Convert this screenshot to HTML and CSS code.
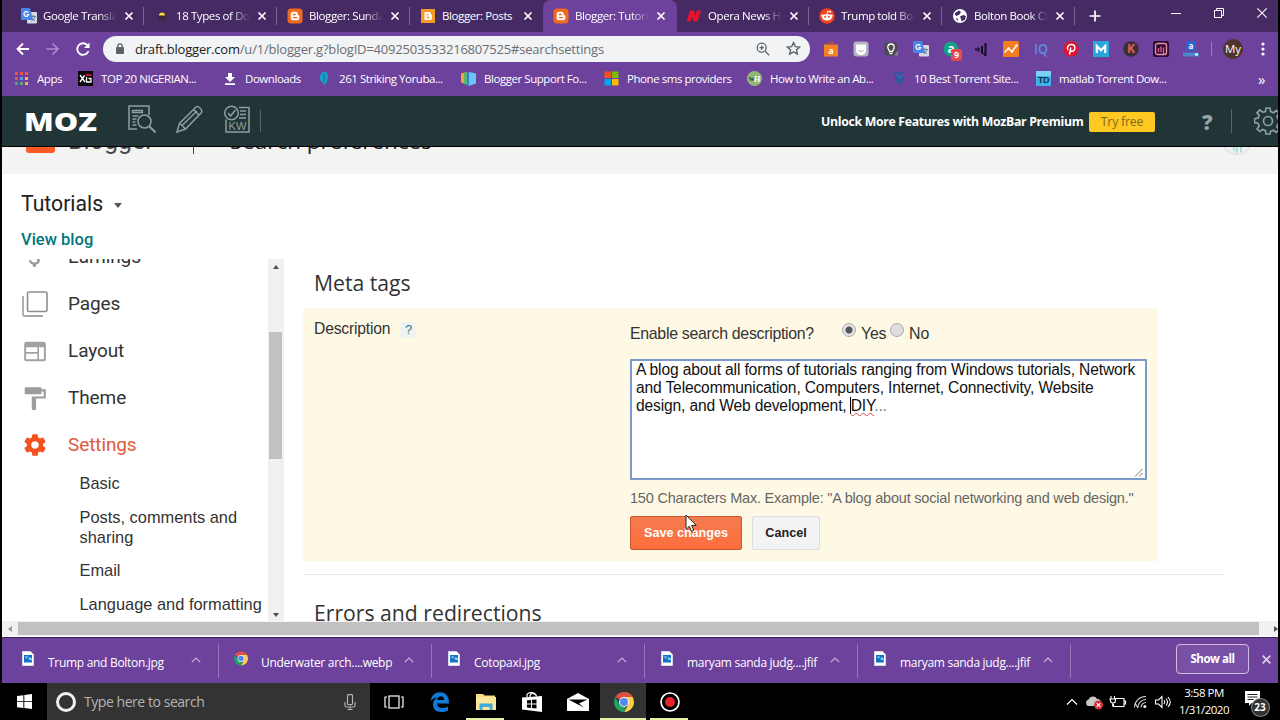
FILE: index.html
```html
<!DOCTYPE html>
<html>
	<head>
		<meta charset="UTF-8">
		<title>Blogger: Tutorials - Search preferences</title>
		<link rel="stylesheet" href="styles.css">
	</head>
	<body>
		<!-- shared icons -->
		<svg class="defs" width="0" height="0">
			<symbol id="x" viewBox="0 0 10 10"><path d="M1.5 1.5l7 7M8.5 1.5l-7 7" stroke="currentColor" stroke-width="1.7" fill="none"/></symbol>
			<symbol id="blogger" viewBox="0 0 16 16">
				<rect x="0.5" y="0.5" width="15" height="15" rx="3.5" fill="#f06a1d"/>
				<path d="M6.3 3.8h2.2a2.3 2.3 0 0 1 2.3 2.3c0 1 .4 1 1 1.1.4.1.5.3.5.8v1.700a2.600 2.600 0 0 1-2.600 2.600H6.300a2.600 2.600 0 0 1-2.600-2.600V6.400a2.600 2.600 0 0 1 2.600-2.600z" fill="#fff"/>
				<path d="M6.300 6.500h2M6.300 9.700h3.500" stroke="#f06a1d" stroke-width="1.300" stroke-linecap="round"/>
			</symbol>
			<symbol id="translate" viewBox="0 0 16 16">
				<rect x="6" y="4" width="10" height="11.500" rx="1" fill="#d5d9e2"/>
				<path d="M9 8.500h6M12 7v1.500M14 8.500c-.5 2-2 3.500-3.500 4.500M10.500 9.500c.8 1.500 2 2.700 3.500 3.500" stroke="#6b7a90" stroke-width="1" fill="none"/>
				<path d="M1 0h8l3 12H1a1 1 0 0 1-1-1V1a1 1 0 0 1 1-1z" fill="#4a86e8"/>
				<path d="M7.300 4.600a2.400 2.400 0 1 0 .4 1.900H5.500" stroke="#fff" stroke-width="1.200" fill="none"/>
			</symbol>
			<symbol id="chrome" viewBox="0 0 20 20">
				<path d="M10 10L1.340 5A10 10 0 0 1 18.660 5z" fill="#dd5144"/>
				<path d="M10 10V0a10 10 0 0 1 8.660 5H10z" fill="#dd5144"/>
				<path d="M18.660 5A10 10 0 0 1 10 20l4.330-7.500L10 5z" fill="#ffcd46"/>
				<path d="M10 20A10 10 0 0 1 1.340 5l4.330 7.500L12 14.500z" fill="#1ea362"/>
				<circle cx="10" cy="10" r="5" fill="#f1f1f1"/>
				<circle cx="10" cy="10" r="3.900" fill="#4a8af4"/>
			</symbol>
			<symbol id="file" viewBox="0 0 12 15">
				<path d="M.5.5h8l3 3v11H.5z" fill="#fff" stroke="#d8d8e4"/>
				<rect x="2" y="4" width="8" height="7.500" fill="#1473c4"/>
				<path d="M2.500 5.500h4l-2 2zM6 8l2-2 2 2v1.500z" fill="#8fd0f5"/>
			</symbol>
			<symbol id="up" viewBox="0 0 10 6"><path d="M.8 5.200L5 1l4.200 4.200" fill="none" stroke="currentColor" stroke-width="1.200"/></symbol>
		</svg>

		<div class="screen">
			<!-- tabs -->
			<div class="tabs">
				<div class="tab"><svg class="fav"><use href="#translate"/></svg><span class="name">Google Translate</span><svg class="close"><use href="#x"/></svg></div>
				<div class="tab"><svg class="fav" viewBox="0 0 16 16"><circle cx="8" cy="8" r="4" fill="#3a2b3b"/><path d="M5 7.500a3 3 0 0 1 6 0z" fill="#f0dc3c"/></svg><span class="name">18 Types of Domain</span><svg class="close"><use href="#x"/></svg></div>
				<div class="tab"><svg class="fav"><use href="#blogger"/></svg><span class="name">Blogger: Sunday Blog</span><svg class="close"><use href="#x"/></svg></div>
				<div class="tab last"><svg class="fav sq" viewBox="0 0 16 16"><rect x="1" y="1" width="14" height="14" fill="#f39a25"/><path d="M4.500 4h4.500a2 2 0 0 1 2 2.500c1 .3 1 .8 1 1.500v1.500a2.500 2.500 0 0 1-2.500 2.500h-5z" fill="#fff"/><path d="M6.500 6.500h2M6.500 9.500h3" stroke="#f39a25" stroke-width="1.300"/></svg><span class="name">Blogger: Posts</span><svg class="close"><use href="#x"/></svg></div>
				<div class="tab active"><svg class="fav"><use href="#blogger"/></svg><span class="name">Blogger: Tutorials</span><svg class="close"><use href="#x"/></svg></div>
				<div class="tab"><svg class="fav" viewBox="0 0 16 16"><path d="M4 2.500h4l1.200 5L11 2.500h4l-3.500 11h-4l-1.200-5-1.800 5h-4z" fill="#e8122b"/></svg><span class="name">Opera News Hub</span><svg class="close"><use href="#x"/></svg></div>
				<div class="tab"><svg class="fav" viewBox="0 0 16 16"><circle cx="8" cy="8" r="7.700" fill="#f4441e"/><ellipse cx="8" cy="9.300" rx="4.700" ry="3.300" fill="#fff"/><circle cx="3.500" cy="7.700" r="1.200" fill="#fff"/><circle cx="12.500" cy="7.700" r="1.200" fill="#fff"/><path d="M8 6l.8-2.800 2.400.5" stroke="#fff" fill="none"/><circle cx="11.200" cy="3.800" r="1" fill="#fff"/><circle cx="6.200" cy="8.700" r="1" fill="#f4441e"/><circle cx="9.800" cy="8.700" r="1" fill="#f4441e"/></svg><span class="name">Trump told Bolton</span><svg class="close"><use href="#x"/></svg></div>
				<div class="tab"><svg class="fav" viewBox="0 0 16 16"><circle cx="8" cy="8" r="7" fill="#fff"/><path d="M3 5l4-2.500L9 4 7.500 6.500 4.500 8 3 7zM8 8.500l3-1.500 3 1-1 3.500-3.500 2L9 11zM3.500 10l2.500 1-.5 2z" fill="#462a64"/></svg><span class="name">Bolton Book Club</span><svg class="close"><use href="#x"/></svg></div>
				<svg class="plus" viewBox="0 0 12 12"><path d="M6 .5v11M.5 6h11" stroke="#fff" stroke-width="1.700"/></svg>
				<div class="winbtns">
					<svg viewBox="0 0 12 12"><path d="M1 6.500h10" stroke="#fff"/></svg>
					<svg viewBox="0 0 12 12"><path d="M1.500 3.500h7v7h-7zM3.500 3.500v-2h7v7h-2" fill="none" stroke="#fff"/></svg>
					<svg viewBox="0 0 12 12"><path d="M1.300 1.300l9.400 9.400M10.700 1.300l-9.400 9.400" stroke="#fff" stroke-width="1.100"/></svg>
				</div>
			</div>

			<!-- address bar -->
			<div class="toolbar">
				<div class="nav">
					<svg viewBox="0 0 16 16"><path d="M14 8H2.500M8 2.500L2.500 8 8 13.500" fill="none" stroke="#fff" stroke-width="1.800"/></svg>
					<svg viewBox="0 0 16 16"><path d="M1.500 8H13M7.500 2.500L13 8l-5.500 5.500" fill="none" stroke="#a98bcb" stroke-width="1.700"/></svg>
					<svg viewBox="0 0 16 16"><path d="M13.500 10A5.800 5.800 0 1 1 12.300 4.100L14 6" fill="none" stroke="#fff" stroke-width="1.800"/><path d="M14.500 1.500v5.500H9z" fill="#fff"/></svg>
				</div>
				<div class="omnibox">
					<svg class="lock" viewBox="0 0 8 11"><rect y="4" width="8" height="7" rx="1" fill="#5f6368"/><path d="M1.800 5V3a2.200 2.200 0 0 1 4.400 0v2" fill="none" stroke="#5f6368" stroke-width="1.300"/></svg>
					<span class="url"><b>draft.blogger.com</b>/u/1/blogger.g?blogID=4092503533216807525#searchsettings</span>
					<svg class="mag" viewBox="0 0 14 14"><circle cx="5.700" cy="5.700" r="4.500" fill="none" stroke="#5f6368" stroke-width="1.300"/><path d="M9 9l4.200 4.200M3.500 5.700h4.400M5.700 3.500v4.400" stroke="#5f6368" stroke-width="1.300"/></svg>
					<svg class="star" viewBox="0 0 14 14"><path d="M7 1.500l1.700 3.700 4 .4-3 2.700.9 4L7 10.200l-3.600 2.100.9-4-3-2.700 4-.4z" fill="none" stroke="#5f6368" stroke-width="1.300"/></svg>
				</div>
				<div class="exts">
					<svg viewBox="0 0 16 16"><path d="M1 3.500h14v12H1z" fill="#f58220"/><path d="M5 4c0-4 6-4 6 0" fill="none" stroke="#c9591b" stroke-width="1.200"/><text x="8" y="12.500" class="g w">a</text></svg>
					<svg viewBox="0 0 16 16"><rect x=".5" y=".5" width="15" height="15" rx="3" fill="#b9b4c5"/><path d="M3 3.500h10v6a5 4.500 0 0 1-10 0z" fill="#fff"/><path d="M5.500 9.500q2.500 2 5 0" stroke="#aaa" fill="none"/></svg>
					<svg viewBox="0 0 16 16"><rect x="1.500" y="1.500" width="13" height="13" rx="2" fill="#4d4a50"/><path d="M6.500 10.500C6.500 9 4.800 8.500 4.800 6.200a3.200 3.200 0 0 1 6.400 0C11.200 8.500 9.500 9 9.500 10.500z" fill="none" stroke="#fff" stroke-width="1.300"/><path d="M6.500 12.500h3" stroke="#fff" stroke-width="1.300"/><path d="M15 9.500l-4 5h4z" fill="#8a878e"/></svg>
					<svg><use href="#translate"/></svg>
					<div class="badged"><svg viewBox="0 0 16 16"><circle cx="8" cy="8" r="7.500" fill="#159f86"/><text x="8" y="12" class="g w big">a</text></svg><i>9</i></div>
					<svg viewBox="0 0 16 16"><path d="M12.500 2v13M9 5v7.500M5.500 6.500v4" stroke="#150d22" stroke-width="2"/><path d="M2 7.500h2v2H2zM9 12l3.500 3v-3z" fill="#150d22"/></svg>
					<svg viewBox="0 0 16 16"><rect width="16" height="16" rx="1.500" fill="#f57c1f"/><path d="M1.500 11.500l4-4 3.500 3L14 4" fill="none" stroke="#fff" stroke-width="1.500"/><circle cx="5.500" cy="7.500" r="1.200" fill="#fff"/><circle cx="9" cy="10.500" r="1.200" fill="#fff"/><circle cx="13.500" cy="4.500" r="1.200" fill="#fff"/></svg>
					<svg viewBox="0 0 16 16"><text x="8" y="13" class="g iq" textLength="14" lengthAdjust="spacingAndGlyphs">IQ</text></svg>
					<svg viewBox="0 0 16 16"><circle cx="8" cy="8" r="7.800" fill="#dc1630"/><path d="M7.800 6.500L6.500 13.500M5 9C3.300 6.500 5.300 3.600 8.300 3.600c5 0 4.200 6.700.8 6.700-.9 0-1.600-.5-1.700-1.200" fill="none" stroke="#fff" stroke-width="1.500"/></svg>
					<svg viewBox="0 0 16 16"><rect width="16" height="16" fill="#2ba5dc"/><path d="M3.800 12V5L8 9.200 12.200 5v7" fill="none" stroke="#fff" stroke-width="2.200"/></svg>
					<svg viewBox="0 0 16 16"><circle cx="8" cy="8" r="7.800" fill="#3a2f38"/><text x="8" y="12.300" class="g k">K</text></svg>
					<svg viewBox="0 0 16 16"><rect width="16" height="16" rx="2" fill="#2b0d36"/><path d="M4.500 2.500h7a2 2 0 0 1 2 2v7a2 2 0 0 1-2 2M11.500 13.500h-7a2 2 0 0 1-2-2v-7a2 2 0 0 1 2-2" fill="none" stroke="#ee8fa4" stroke-width="1.300"/><path d="M5.500 7v4M8 5.500V11M10.500 6.500V13" stroke="#ee5f95" stroke-width="1.300"/></svg>
					<svg viewBox="0 0 16 16"><rect x="3.500" width="9" height="10" rx="2" fill="#2b68d0"/><text x="8" y="8" class="g w sm">a</text><rect x="0" y="11.500" width="16" height="4" fill="#4b86c8"/><rect x="12" y="12.500" width="3" height="2" fill="#fff"/></svg>
				</div>
				<div class="avatar">My</div>
				<svg class="dots" viewBox="0 0 4 16"><circle cx="2" cy="3" r="1.600" fill="#fff"/><circle cx="2" cy="8" r="1.600" fill="#fff"/><circle cx="2" cy="13" r="1.600" fill="#fff"/></svg>
			</div>

			<!-- bookmarks -->
			<div class="bookmarks">
				<div class="bm"><svg viewBox="0 0 15 15"><path d="M1 1h3v3H1zM1 6h3v3H1z" fill="#e2574c"/><path d="M6 1h3v3H6zM11 1h3v3h-3z" fill="#e8574b"/><path d="M6 6h3v3H6z" fill="#5b9be8"/><path d="M11 6h3v3h-3zM11 11h3v3h-3z" fill="#f5b63c"/><path d="M1 11h3v3H1z" fill="#4aa877"/><path d="M6 11h3v3H6z" fill="#55a87f"/></svg>Apps</div>
				<div class="bm"><svg viewBox="0 0 15 15"><rect width="15" height="15" fill="#0b0408"/><path d="M2 4l5 7M6.500 4.500L2 11" stroke="#fff" stroke-width="1.400"/><path d="M7.500 4h6" stroke="#e22b3c" stroke-width="1.600"/><path d="M13 7.500h-2.500M13 7v4H8.500V6" fill="none" stroke="#fff" stroke-width="1.300"/></svg>TOP 20 NIGERIAN...</div>
				<div class="bm"><svg viewBox="0 0 15 15"><path d="M6 2h4v4h3L8 11 3 6h3zM3 12.300h10v1.700H3z" fill="#fff"/></svg>Downloads</div>
				<div class="bm"><svg viewBox="0 0 15 15"><path d="M7 1c3-1 5 1 5 4l-1 6-3 3-1-2-3-3c-1-3 0-6 3-8z" fill="#19a0c9"/><path d="M8 3v8" stroke="#0c6d9c"/></svg>261 Striking Yoruba...</div>
				<div class="bm"><svg viewBox="0 0 15 15"><path d="M0 2.500L5 1v12l-5-1.500z" fill="#f2a33c"/><path d="M3 2l4-1v13l-4-1z" fill="#56b86a"/><path d="M6 1h3v14H6z" fill="#3183d8"/><path d="M8 1l7 1.500v10L8 15z" fill="#6fc3f5"/></svg>Blogger Support Fo...</div>
				<div class="bm"><svg viewBox="0 0 15 15"><path d="M.500.500h6.500v6.500H.500z" fill="#f25022"/><path d="M8 .500h6.500v6.500H8z" fill="#7fba00"/><path d="M.500 8h6.500v6.500H.500z" fill="#00a4ef"/><path d="M8 8h6.500v6.500H8z" fill="#ffb900"/></svg>Phone sms providers</div>
				<div class="bm"><svg viewBox="0 0 15 15"><circle cx="7.500" cy="7.500" r="7.500" fill="#93b874"/><text x="4.500" y="10" class="wh dk">w</text><text x="10" y="10.500" class="wh">H</text></svg>How to Write an Ab...</div>
				<div class="bm"><svg viewBox="0 0 15 15"><path d="M3 1h10v2H3zM4 4h9v5l-4 5-4-3z" fill="#31569f"/><path d="M5 4l4 3 3-3" stroke="#4b7abf" fill="none"/></svg>10 Best Torrent Site...</div>
				<div class="bm"><svg viewBox="0 0 15 15"><rect width="15" height="15" fill="#3fb3e6"/><rect width="15" height="5" fill="#7cd0f3"/><text x="7.500" y="11.500" class="td">TD</text></svg>matlab Torrent Dow...</div>
				<div class="more">»</div>
			</div>

			<!-- mozbar -->
			<div class="mozbar">
				<svg class="logo" viewBox="0 0 72 20"><text x="-1" y="18" textLength="73" lengthAdjust="spacingAndGlyphs">MOZ</text></svg>
				<div class="tools">
					<svg viewBox="0 0 28 28"><path d="M9 24H1V1h20v9" fill="none" stroke="#8f9ea0" stroke-width="1.500"/><path d="M4.500 5.500h10v2h-10zM4.500 11h6M4.500 14h4M4.500 17h3M4.500 20h4" fill="none" stroke="#8f9ea0" stroke-width="1.300"/><circle cx="16.500" cy="16.500" r="6.500" fill="none" stroke="#8f9ea0" stroke-width="1.500"/><path d="M21.500 21.500l6 6" stroke="#8f9ea0" stroke-width="2"/></svg>
					<svg viewBox="0 0 28 28"><path d="M1 27l2.500-8.500L20 2c2-2 7 3 5.500 5.500L9.500 24zM4 18.500l5.500 5.500M17.500 4.500l6 6M5.500 21L21 6M1 27l3-1" fill="none" stroke="#8f9ea0" stroke-width="1.500"/></svg>
					<svg viewBox="0 0 28 28"><path d="M16 2.500h10V27H3V14.500" fill="none" stroke="#8f9ea0" stroke-width="1.500"/><circle cx="8.500" cy="8" r="6.800" fill="none" stroke="#8f9ea0" stroke-width="1.500"/><path d="M5 8l2.500 3 5-6" fill="none" stroke="#8f9ea0" stroke-width="1.500"/><path d="M17 6h6M17 9.500h6M16 13h7" stroke="#8f9ea0" stroke-width="1.300"/><text x="14.500" y="25" textLength="18" lengthAdjust="spacingAndGlyphs">KW</text></svg>
				</div>
				<span class="unlock">Unlock More Features with MozBar Premium</span>
				<span class="try">Try free</span>
				<span class="help">?</span>
				<div class="gearbox"><svg viewBox="0 0 28 28"><path d="M11.500 4.500L12 1h4l.5 3.500 3 1.200L22.500 3.500l2.500 2.800-2 3 1.200 2.700 3.300.5v4l-3.500.5-1.200 2.800 2.200 2.800-2.800 2.700-2.900-2.100-2.800 1.200L16 27h-4l-.5-3.400-2.800-1.200-2.900 2.100L3 21.800 5.200 19 4 16.200.5 15.700v-4L4 11.200l1.200-2.800L3 5.800 5.800 3l2.900 2.200z" fill="none" stroke="#8f9ea0" stroke-width="1.700"/><circle cx="14" cy="14" r="4.500" fill="none" stroke="#8f9ea0" stroke-width="1.700"/></svg></div>
			</div>

			<!-- page -->
			<div class="page">
				<div class="head">
					<div class="blogo"></div>
					<span class="brand">Blogger</span>
					<span class="bar"></span>
					<span class="title">Search preferences</span>
					<svg class="me" viewBox="0 0 32 32"><circle cx="16" cy="16" r="15.500" fill="#eaf3f2" stroke="#dadada"/><path d="M12 24l2 4M16 23v7M20 23v6" stroke="#b5e0da" stroke-width="2"/></svg>
				</div>

				<div class="cols">
					<div class="side">
						<div class="blogname">Tutorials<i class="caret"></i></div>
						<a class="view">View blog</a>
						<div class="scroller">
							<ul class="menu">
								<li><svg viewBox="0 0 24 24"><path d="M11.800 10.900c-2.270-.59-3-1.200-3-2.150 0-1.090 1.010-1.850 2.700-1.850 1.780 0 2.440.85 2.500 2.100h2.210c-.07-1.720-1.120-3.300-3.210-3.810V3h-3v2.160c-1.940.42-3.500 1.680-3.500 3.610 0 2.310 1.910 3.460 4.700 4.130 2.500.6 3 1.480 3 2.410 0 .69-.49 1.790-2.700 1.790-2.060 0-2.870-.92-2.980-2.100h-2.200c.12 2.190 1.760 3.420 3.680 3.830V21h3v-2.150c1.950-.37 3.500-1.500 3.500-3.550 0-2.840-2.430-3.810-4.700-4.400z" fill="#999"/></svg>Earnings</li>
								<li><svg class="pg" viewBox="0 0 26 26"><rect x="5.500" y="1" width="19.500" height="19.500" rx="1.500" fill="none" stroke="#8e8e8e" stroke-width="1.600"/><path d="M1 5v18.500a1.500 1.500 0 0 0 1.500 1.500H21" fill="none" stroke="#a8a8a8" stroke-width="1.800"/></svg>Pages</li>
								<li><svg viewBox="0 0 24 24"><rect x="2" y="3.500" width="20" height="18" rx="2" fill="#a2a2a2"/><path d="M3.800 8.500h10.400v4.500H3.800zM3.800 14.500h10.400v5.200H3.800zM15.700 8.500h4.500v11.200h-4.500z" fill="#fff"/></svg>Layout</li>
								<li><svg viewBox="0 0 24 24"><path d="M18 4V3c0-.55-.45-1-1-1H3.500c-.55 0-1 .45-1 1v4.500c0 .55.45 1 1 1H17c.55 0 1-.45 1-1V6h2v4.500H9V22c0 .55.45 1 1 1h2c.55 0 1-.45 1-1v-9.500h9V4z" fill="#9c9c9c"/></svg>Theme</li>
								<li class="on"><svg class="cog" viewBox="0 0 24 24"><path d="M19.430 12.980c.04-.32.07-.64.07-.98s-.03-.66-.07-.98l2.110-1.650c.19-.15.24-.42.12-.64l-2-3.460c-.12-.22-.39-.3-.61-.22l-2.490 1c-.52-.4-1.080-.73-1.690-.98l-.38-2.650C14.460 2.180 14.250 2 14 2h-4c-.25 0-.46.18-.49.42l-.38 2.650c-.61.25-1.170.59-1.690.98l-2.490-1c-.23-.09-.49 0-.61.22l-2 3.460c-.13.22-.07.49.12.64l2.110 1.650c-.04.32-.07.65-.07.98s.03.66.07.98l-2.110 1.650c-.19.15-.24.42-.12.64l2 3.460c.12.22.39.3.61.22l2.490-1c.52.4 1.080.73 1.690.98l.38 2.650c.03.24.24.42.49.42h4c.25 0 .46-.18.49-.42l.38-2.650c.61-.25 1.170-.59 1.690-.98l2.490 1c.23.09.49 0 .61-.22l2-3.460c.12-.22.07-.49-.12-.64l-2.110-1.650zM12 15.500c-1.930 0-3.500-1.570-3.500-3.500s1.570-3.500 3.500-3.500 3.500 1.570 3.500 3.500-1.570 3.500-3.500 3.500z" fill="#f4511e"/></svg>Settings</li>
							</ul>
							<ul class="sub">
								<li>Basic</li>
								<li>Posts, comments and sharing</li>
								<li>Email</li>
								<li>Language and formatting</li>
							</ul>
							<div class="vbar"><i class="tri-up"></i><span class="thumb"></span><i class="tri-down"></i></div>
						</div>
					</div>

					<div class="main">
						<h2>Meta tags</h2>
						<div class="panel">
							<div class="label">Description <span class="q">?</span></div>
							<div class="form">
								<div class="enable"><span class="ask">Enable search description?</span><i class="radio checked"></i><span class="yes">Yes</span><i class="radio"></i><span>No</span></div>
								<div class="textarea">
									<p>A blog about all forms of tutorials ranging from Windows tutorials, Network</p>
									<p class="l2">and Telecommunication, Computers, Internet, Connectivity, Website</p>
									<p class="l3">design, and Web development, <span class="cursor"></span><span class="diy">DIY</span><span class="rest">...</span></p>
									<svg class="grip" viewBox="0 0 9 9"><path d="M1 8.500L8.500 1M5 8.500L8.500 5" stroke="#777"/></svg>
								</div>
								<div class="hint">150 Characters Max. Example: "A blog about social networking and web design."</div>
								<div class="btns">
									<span class="btn save">Save changes</span>
									<span class="btn">Cancel</span>
									<svg class="pointer" viewBox="0 0 12 19"><path d="M1 1v14.500l3.300-3.200 2.200 5 2.300-1-2.200-4.900h4.600z" fill="#fff" stroke="#222"/></svg>
								</div>
							</div>
						</div>
						<hr>
						<h2 class="err">Errors and redirections</h2>
					</div>
				</div>
			</div>
			<div class="hbar"><i class="tri-left"></i><span class="thumb"></span><i class="tri-right"></i></div>

			<!-- downloads -->
			<div class="downloads">
				<div class="dl"><svg class="ic"><use href="#file"/></svg><span class="fname">Trump and Bolton.jpg</span><svg class="up"><use href="#up"/></svg></div>
				<div class="dl"><svg class="ic"><use href="#chrome"/></svg><span class="fname">Underwater arch....webp</span><svg class="up"><use href="#up"/></svg></div>
				<div class="dl"><svg class="ic"><use href="#file"/></svg><span class="fname">Cotopaxi.jpg</span><svg class="up"><use href="#up"/></svg></div>
				<div class="dl"><svg class="ic"><use href="#file"/></svg><span class="fname">maryam sanda judg....jfif</span><svg class="up"><use href="#up"/></svg></div>
				<div class="dl"><svg class="ic"><use href="#file"/></svg><span class="fname">maryam sanda judg....jfif</span><svg class="up"><use href="#up"/></svg></div>
				<span class="showall">Show all</span>
				<svg class="dclose"><use href="#x"/></svg>
			</div>

			<!-- taskbar -->
			<div class="taskbar">
				<div class="start"><svg viewBox="0 0 16 16"><path d="M0 2.200l6.800-1v6.400H0zM7.800 1L16 0v7.600H7.800zM0 8.500h6.800V15L0 14zM7.800 8.500H16V16l-8.200-1.100z" fill="#fff"/></svg></div>
				<div class="search"><i class="ring"></i><span>Type here to search</span><svg viewBox="0 0 12 16"><rect x="3.500" y=".6" width="5" height="10" rx="1" fill="none" stroke="#b5b5b5" stroke-width="1.100"/><path d="M1 8v3.500a1.500 1.500 0 0 0 1.500 1.500h7a1.500 1.500 0 0 0 1.500-1.500V8M6 13v2.500M3.500 15.500h5" fill="none" stroke="#b5b5b5" stroke-width="1.100"/></svg></div>
				<div class="app"><svg viewBox="0 0 20 20"><rect x="5" y="4" width="10" height="12" fill="none" stroke="#fff" stroke-width="1.200"/><path d="M3 5H1v10h2M17 5h2v10h-2" fill="none" stroke="#fff" stroke-width="1.200"/></svg></div>
				<div class="app"><svg viewBox="0 0 20 20"><path d="M.8 9C1.500 3.500 5 .3 10 .3c6 0 9.200 4.500 9 11.200H7c0 3 2.500 4.500 5.500 4.500 2 0 4-.5 5.500-1.500v4c-2 1-4.200 1.500-7 1.500-5 0-8-3-8-7.500 0-3 1.500-5.500 4.500-7C5 5.500 2.500 6.500.8 9zM7.200 8H14c0-2.300-1-3.800-3.300-3.800C8.800 4.200 7.500 5.700 7.200 8z" fill="#0f7ad8"/></svg></div>
				<div class="app run"><svg viewBox="0 0 20 20"><path d="M0 2h7l1.500 1.500H19V18H0z" fill="#f7dc84"/><path d="M0 5h20v13H0z" fill="#fbe79c"/><path d="M3.500 18v-6.500h13V18h-3v-3h-7v3z" fill="#3fa9d8"/></svg></div>
				<div class="app"><svg viewBox="0 0 20 20"><path d="M0 5.500l20-1.500v16L0 17.500z" fill="#fff"/><path d="M5 5V3c0-3 8-3.500 9.500 1M8 5V3.500C9 .5 14 1 14.500 4.500" fill="none" stroke="#fff" stroke-width="1.200"/><path d="M5 8.200l4-.3v3.600H5zM10 7.800l4.500-.3v4H10zM5 12.400h4V16l-4-.4zM10 12.400h4.500v4.200L10 16z" fill="#000"/></svg></div>
				<div class="app"><svg class="mail" viewBox="0 0 22 18"><path d="M0 6l11-6 11 6v12H0z" fill="#fff"/><path d="M1.500 6.500h19L12 10.500l5 4-7-3.500z" fill="#000"/></svg></div>
				<div class="app run cur"><svg><use href="#chrome"/></svg></div>
				<div class="app run"><svg viewBox="0 0 20 20"><circle cx="10" cy="10" r="9" fill="none" stroke="#fff" stroke-width="1.700"/><circle cx="10" cy="10" r="5" fill="#e8222a"/></svg></div>
				<div class="tray">
					<svg viewBox="0 0 22 20"><path d="M6 12.500l5-5 5 5" fill="none" stroke="#fff" stroke-width="1.200"/></svg>
					<svg viewBox="0 0 22 20"><path d="M4 14a3.500 3.500 0 0 1 .5-6.500C6 4 11 3.500 13 7c3 0 4.500 2 4 5v2z" fill="#c9c9c9"/><circle cx="14.500" cy="13" r="4.500" fill="#d62f3c"/><path d="M12.700 11.200l3.600 3.600M16.300 11.200l-3.600 3.600" stroke="#fff" stroke-width="1.200"/></svg>
					<svg viewBox="0 0 22 20"><path d="M9 6.500h9v8H7.500V12M18 9h1.500v3H18M5 4v3M8.500 4v3M4 7h5.500v1.500a2.500 2.500 0 0 1-5 0zM6.700 11v3.500" fill="none" stroke="#fff" stroke-width="1.100"/></svg>
					<svg viewBox="0 0 22 20"><path d="M4.500 15.500A11 11 0 0 1 16 4.500M8 15.500a8 8 0 0 1 8-8M11 15.500a5 5 0 0 1 5-5M5 11l3 5" fill="none" stroke="#d6d6d6" stroke-width="1.100"/><circle cx="14.800" cy="14.500" r="1.500" fill="#fff"/></svg>
					<svg viewBox="0 0 22 20"><path d="M3.500 8h3L10 4.500v11L6.500 12h-3zM12 8q1.500 2 0 4M14 6.500q3 3.500 0 7M16 5q4.500 5 0 10" fill="none" stroke="#fff" stroke-width="1.100"/></svg>
					<div class="clock"><span>3:58 PM</span><span>1/31/2020</span></div>
					<div class="notif"><svg viewBox="0 0 16 16"><path d="M0 0h15v12H6.500L4 15v-3H0z" fill="#fff"/><path d="M2.500 3.500h10M2.500 6h10M2.500 8.500h6" stroke="#222"/></svg><i>23</i></div>
				</div>
			</div>
		</div>
	</body>
</html>
```
FILE: styles.css
```css
*{
	margin: 0;
	padding: 0;
	box-sizing: border-box;
}
ul{
	list-style: none;
}
i{
	font-style: normal;
}
svg{
	display: block;
	flex: none;
}
.defs{
	position: absolute;
}
body{
	width: 1280px;
	height: 720px;
	overflow: hidden;
	background: #000;
	font-family: "Liberation Sans", Arial, sans-serif;
}
.screen{
	width: 1280px;
	height: 720px;
	padding: 0 2px;
	display: flex;
	flex-direction: column;
	overflow: hidden;
}

/* tabs */
.tabs{
	height: 32px;
	padding-left: 9px;
	background: #462a64;
	display: flex;
	align-items: stretch;
	flex: none;
}
.tab{
	width: 133px;
	height: 32px;
	padding-left: 10px;
	display: flex;
	align-items: center;
	flex: none;
	background: linear-gradient(#7b6494, #7b6494) right 0 top 7px / 1px 18px no-repeat;
	color: #fff;
}
.tab.last{
	background: none;
}
.tab.active{
	background: #6d429c;
	border-radius: 8px 8px 0 0;
	box-shadow: 1px 0 #6d429c;
}
.fav{
	width: 16px;
	height: 16px;
	margin-right: 6px;
}
.name{
	width: 74px;
	overflow: hidden;
	white-space: nowrap;
	font: 11.5px/16px "Open Sans", sans-serif;
	letter-spacing: -0.4px;
	-webkit-mask-image: linear-gradient(to right, #000 75%, transparent);
	mask-image: linear-gradient(to right, #000 75%, transparent);
}
.last .name{
	-webkit-mask-image: none;
	mask-image: none;
}
.close{
	width: 10px;
	height: 10px;
	margin-left: 7px;
}
.plus{
	width: 12px;
	height: 12px;
	margin: 10px 0 0 14px;
}
.winbtns{
	margin-left: auto;
	width: 118px;
	padding: 7px 10px 0 10px;
	display: flex;
	justify-content: space-between;
}
.winbtns svg{
	width: 12px;
	height: 12px;
}

/* address bar */
.toolbar{
	height: 33px;
	background: #6d429c;
	display: flex;
	align-items: center;
	flex: none;
}
.nav{
	width: 101px;
	padding-left: 13px;
	display: flex;
	gap: 14px;
}
.nav svg{
	width: 16px;
	height: 16px;
}
.omnibox{
	width: 707px;
	height: 26px;
	padding: 0 9px 0 13px;
	border-radius: 13px;
	background: #f1f3f4;
	display: flex;
	align-items: center;
}
.lock{
	width: 8px;
	height: 11px;
	margin-right: 11px;
}
.url{
	flex: 1;
	font: 13px/18px "Open Sans", sans-serif;
	letter-spacing: -0.2px;
	color: #6a6e73;
}
.url b{
	font-weight: normal;
	color: #202124;
}
.mag, .star{
	width: 14px;
	height: 14px;
}
.star{
	width: 15px;
	height: 15px;
	margin-left: 16px;
}
.exts{
	width: 402px;
	padding-left: 13px;
	display: flex;
	gap: 14px;
	background: linear-gradient(#9a7cbc, #9a7cbc) right / 1px 14px no-repeat;
}
.exts svg{
	width: 16px;
	height: 16px;
}
.badged{
	position: relative;
}
.badged i{
	position: absolute;
	left: 8px;
	top: 8px;
	width: 11px;
	height: 12px;
	border-radius: 2px;
	background: #e5484f;
	color: #fff;
	font: bold 9px/12px "Open Sans", sans-serif;
	text-align: center;
}
.g{
	font: bold 9px "Open Sans", sans-serif;
	text-anchor: middle;
}
.g.w{
	fill: #fff;
}
.g.big{
	font-size: 12px;
}
.g.sm{
	font-size: 8px;
}
.g.iq{
	font-size: 14px;
	font-weight: 600;
	fill: #5b8fe0;
}
.g.k{
	font-size: 12px;
	fill: #e0604a;
}
.avatar{
	width: 20px;
	height: 20px;
	margin-left: 11px;
	border-radius: 50%;
	background: #4d342e;
	color: #fff;
	font: 11.5px/19px "Open Sans", sans-serif;
	text-align: center;
}
.dots{
	width: 4px;
	height: 16px;
	margin-left: 18px;
}

/* bookmarks */
.bookmarks{
	height: 31px;
	padding: 0 0 4px 12px;
	background: #6d429c;
	display: grid;
	grid-template-columns: 64px 144px 94px 145px 143px 143px 144px 145px 218px 30px;
	align-items: center;
	flex: none;
	color: #fff;
	font: 11.5px/16px "Open Sans", sans-serif;
	letter-spacing: -0.45px;
	white-space: nowrap;
}
.bm{
	display: flex;
	align-items: center;
	gap: 8px;
}
.bm svg{
	width: 15px;
	height: 15px;
}
.wh{
	font: bold 8px "Liberation Serif", serif;
	fill: #fff;
	text-anchor: middle;
}
.wh.dk{
	fill: #33472a;
}
.td{
	font: bold 9px "Liberation Sans", sans-serif;
	fill: #0a3350;
	text-anchor: middle;
}
.more{
	font-size: 15px;
	padding-left: 4px;
}

/* mozbar */
.mozbar{
	height: 51px;
	padding-left: 23px;
	background: #213436;
	border-bottom: 1px solid #000;
	display: flex;
	align-items: center;
	flex: none;
	overflow: hidden;
}
.logo{
	width: 72px;
	height: 20px;
	margin-top: 3px;
}
.logo text{
	font: 800 25px "Open Sans", sans-serif;
	fill: #fff;
}
.tools{
	width: 164px;
	height: 28px;
	padding-left: 31px;
	margin-top: -5px;
	display: flex;
	gap: 19.5px;
	background: linear-gradient(#56676a, #56676a) right 0 top 5px / 1px 22px no-repeat;
}
.tools svg{
	width: 28px;
	height: 28px;
}
.tools text{
	font: 11px "Liberation Sans", sans-serif;
	fill: #8f9ea0;
	text-anchor: middle;
}
.unlock{
	width: 268px;
	margin: 1px 0 0 560px;
	color: #fff;
	font: bold 12.3px/18px "Open Sans", sans-serif;
	letter-spacing: -0.32px;
	white-space: nowrap;
}
.try{
	width: 66px;
	height: 20px;
	margin-top: 1px;
	border-radius: 2px;
	background: #ffc923;
	color: #80691c;
	font: 12.3px/20px "Open Sans", sans-serif;
	letter-spacing: -0.2px;
	text-align: center;
}
.help{
	width: 77px;
	height: 24px;
	padding-left: 47px;
	margin-right: 22px;
	color: #98a5a6;
	font: 800 21px/26px "Open Sans", sans-serif;
	border-right: 1px solid #56676a;
}
.gearbox{
	width: 24px;
	overflow: hidden;
}
.gearbox svg{
	width: 28px;
	height: 28px;
}

/* page */
.page{
	height: 474px;
	background: #fff;
	overflow: hidden;
	flex: none;
}
.head{
	height: 27px;
	background: #f3f3f3;
	display: flex;
	align-items: flex-start;
	overflow: hidden;
	padding-left: 24px;
}
.blogo{
	width: 29px;
	height: 30px;
	margin-top: -24px;
	border-radius: 3px;
	background: #ff5a24;
}
.brand{
	width: 125px;
	padding-left: 13px;
	margin-top: -22px;
	font: 25px/32px Roboto, sans-serif;
	color: #4a4a4a;
}
.bar{
	width: 1px;
	height: 27px;
	margin: -20px 0 0 13px;
	background: #444;
}
.title{
	width: 1027px;
	padding-left: 36px;
	margin-top: -22px;
	font: 22.4px/32px "Open Sans", sans-serif;
	color: #222;
}
.me{
	width: 32px;
	height: 32px;
	margin-top: -24px;
}
.cols{
	display: flex;
	height: 447px;
}
.side{
	width: 282px;
	display: flex;
	flex-direction: column;
}
.blogname{
	height: 52px;
	padding: 16px 0 0 19px;
	font: 21.2px/27px Roboto, sans-serif;
	color: #212121;
	display: flex;
}
.caret{
	margin: 13px 0 0 11px;
	width: 0;
	height: 0;
	border: 4.5px solid transparent;
	border-top: 5px solid #555;
	border-bottom: 0;
}
.view{
	height: 33px;
	padding-left: 19px;
	font: 500 16.5px/27px Roboto, sans-serif;
	color: #00777b;
}
.scroller{
	position: relative;
	height: 362px;
	overflow: hidden;
}
.menu{
	margin-top: -26px;
}
.menu li{
	height: 47px;
	padding-left: 20px;
	display: flex;
	align-items: center;
	font: 19px/46px Roboto, sans-serif;
	letter-spacing: -0.1px;
	color: #333;
}
.menu li svg{
	width: 26px;
	height: 26px;
	margin-right: 20px;
}
.menu li.on{
	color: #e0593a;
}
.sub{
	width: 264px;
	padding: 5px 0 0 77.5px;
	font-size: 16.4px;
	line-height: 20px;
	color: #333;
}
.sub li{
	margin-bottom: 13.7px;
	width: 190px;
}
.sub li:nth-child(2){
	width: 170px;
}
.vbar{
	position: absolute;
	right: 0;
	top: 0;
	width: 16px;
	height: 362px;
	background: #f1f1f1;
	display: flex;
	flex-direction: column;
	align-items: center;
}
.tri-up{
	margin-top: 6px;
	border: 3.5px solid transparent;
	border-bottom: 4px solid #505050;
	border-top: 0;
}
.vbar .thumb{
	width: 13px;
	height: 127px;
	margin-top: 63px;
	margin-right: 1px;
	background: #c1c1c1;
}
.tri-down{
	margin-top: auto;
	margin-bottom: 4px;
	border: 3.5px solid transparent;
	border-top: 4px solid #505050;
	border-bottom: 0;
}

/* settings */
.main{
	width: 994px;
	padding: 92px 0 0 19px;
}
h2{
	padding-left: 11px;
	font: 21.2px/34px "Open Sans", sans-serif;
	color: #333;
	white-space: nowrap;
}
.panel{
	width: 855px;
	height: 253px;
	margin-top: 8px;
	padding-left: 11px;
	background: #fef9e5;
	display: flex;
}
.label{
	width: 316px;
	padding-top: 11px;
	font-size: 15.7px;
	line-height: 20px;
	letter-spacing: -0.2px;
	color: #333;
}
.q{
	display: inline-block;
	width: 16px;
	height: 16px;
	margin-left: 6px;
	background: #f1f3f0;
	color: #2a7f96;
	font-size: 13px;
	line-height: 16px;
	text-align: center;
}
.form{
	width: 517px;
	color: #222;
}
.enable{
	height: 51px;
	padding-top: 16px;
	display: flex;
	font-size: 15.9px;
	line-height: 20px;
	color: #333;
}
.ask{
	width: 211px;
	letter-spacing: -0.3px;
}
.yes{
	letter-spacing: -0.2px;
	width: 28px;
}
.radio{
	width: 14px;
	height: 14px;
	margin: -1px 5px 0 1px;
	border: 1px solid #aaa;
	border-radius: 50%;
	background: #dedede;
}
.radio.checked{
	background: radial-gradient(circle, #555 0, #555 3px, #e4e4e4 4px);
}
.textarea{
	position: relative;
	height: 121px;
	border: 2px solid #7b9acb;
	padding-left: 4px;
	border-radius: 1px;
	background: #fff;
	font-size: 15.6px;
	line-height: 18px;
	letter-spacing: -0.15px;
	color: #111;
	white-space: nowrap;
}
.cursor{
	display: inline-block;
	width: 1px;
	height: 17px;
	margin-left: -1px;
	vertical-align: -3px;
	background: #000;
}
.diy{
	text-decoration: underline wavy #e04848 1px;
	text-underline-offset: 1px;
}
.rest{
	color: #777;
}
.grip{
	position: absolute;
	right: 2px;
	bottom: 1px;
	width: 9px;
	height: 9px;
}
.hint{
	height: 36px;
	padding-top: 8px;
	font-size: 14.5px;
	line-height: 20px;
	letter-spacing: -0.2px;
	color: #666;
	white-space: nowrap;
}
.btns{
	position: relative;
	display: flex;
	gap: 10px;
}
.btn{
	width: 68px;
	height: 34px;
	border: 1px solid #dcdcdc;
	border-radius: 2px;
	background: #f3f3f5;
	font: bold 12.6px/32px "Liberation Sans", sans-serif;
	color: #222;
	text-align: center;
}
.btn.save{
	width: 112px;
	border-color: #cf5530;
	background: linear-gradient(#f37b50, #ff6e3c);
	color: #fff;
}
.pointer{
	position: absolute;
	left: 55px;
	top: -2px;
	width: 12px;
	height: 19px;
}
hr{
	width: 921px;
	margin-top: 13px;
	border: 0;
	border-top: 1px solid #e6e6e6;
}
.err{
	margin-top: 21px;
}
.hbar{
	height: 16px;
	background: #f1f1f1;
	border-bottom: 1px solid #fff;
	display: flex;
	align-items: center;
	flex: none;
}
.hbar .thumb{
	width: 1241px;
	height: 13px;
	margin-left: 6px;
	background: #c1c1c1;
}
.tri-left{
	margin-left: 6px;
	border: 3.5px solid transparent;
	border-right: 4px solid #999;
	border-left: 0;
}
.tri-right{
	margin-left: 15px;
	border: 3.5px solid transparent;
	border-left: 4px solid #505050;
	border-right: 0;
}

/* downloads */
.downloads{
	height: 46px;
	padding-left: 4px;
	border-top: 1px solid #3c1f5e;
	background: #6d429c;
	display: flex;
	align-items: center;
	flex: none;
	color: #fff;
}
.dl{
	width: 213px;
	height: 34px;
	padding-left: 15px;
	border-right: 1px solid #9676b9;
	display: flex;
	align-items: center;
	flex: none;
	font: 12px/18px "Open Sans", sans-serif;
	letter-spacing: -0.3px;
}
.ic{
	width: 14px;
	height: 15px;
	margin-top: -4px;
	margin-right: 13px;
}
.fname{
	width: 143px;
	margin-top: 4px;
	white-space: nowrap;
}
.up{
	width: 10px;
	height: 6px;
	margin-top: -1px;
	color: #c9b3e0;
}
.showall{
	width: 73px;
	height: 30px;
	margin: -3px 0 0 105px;
	border: 1px solid #d0bde3;
	border-radius: 4px;
	background: #7850a6;
	font: bold 11.5px/28px "Open Sans", sans-serif;
	letter-spacing: -0.45px;
	text-align: center;
}
.dclose{
	width: 11px;
	height: 11px;
	margin: -2px 0 0 12px;
	color: #d9cae8;
}

/* taskbar */
.taskbar{
	height: 37px;
	background: #000;
	display: flex;
	flex: none;
	color: #fff;
}
.start{
	width: 45px;
	padding: 11px 0 0 15px;
}
.start svg{
	width: 15px;
	height: 15px;
}
.search{
	width: 323px;
	padding: 0 14px 0 9px;
	background: #333;
	display: flex;
	align-items: center;
	color: #b4b4b4;
	font: 14px/20px "Open Sans", sans-serif;
	letter-spacing: -0.45px;
}
.search span{
	flex: 1;
}
.search svg{
	width: 12px;
	height: 16px;
}
.ring{
	width: 20px;
	height: 20px;
	margin-right: 8px;
	border: 3px solid #f0f0f0;
	border-radius: 50%;
}
.app{
	width: 46px;
	height: 37px;
	padding-left: 1px;
	display: flex;
	align-items: center;
	justify-content: center;
	background: linear-gradient(transparent, transparent) center bottom / 38px 2px no-repeat;
}
.app.run{
	background-image: linear-gradient(#e8efa0, #e8efa0);
}
.app.cur{
	background-color: #333;
	background-size: 46px 2px;
}
.app svg{
	width: 20px;
	height: 20px;
}
.app svg.mail{
	width: 22px;
	height: 18px;
}
.tray{
	margin-left: auto;
	width: 218px;
	display: grid;
	grid-template-columns: 24px 22px 22px 25px 20px 62px 43px;
	align-items: center;
	justify-items: center;
}
.tray > svg{
	width: 22px;
	height: 20px;
}
.clock{
	display: flex;
	flex-direction: column;
	align-items: center;
	margin-top: -2px;
	font: 11.5px/17px "Open Sans", sans-serif;
	letter-spacing: -0.5px;
}
.notif{
	position: relative;
	width: 26px;
	height: 24px;
}
.notif svg{
	width: 16px;
	height: 16px;
	margin: 1px 0 0 1px;
}
.notif i{
	position: absolute;
	left: 8px;
	top: 9px;
	width: 17px;
	height: 17px;
	border-radius: 50%;
	background: #333;
	box-shadow: 0 0 0 1px #888;
	font: bold 10px/17px "Open Sans", sans-serif;
	text-align: center;
}
```
